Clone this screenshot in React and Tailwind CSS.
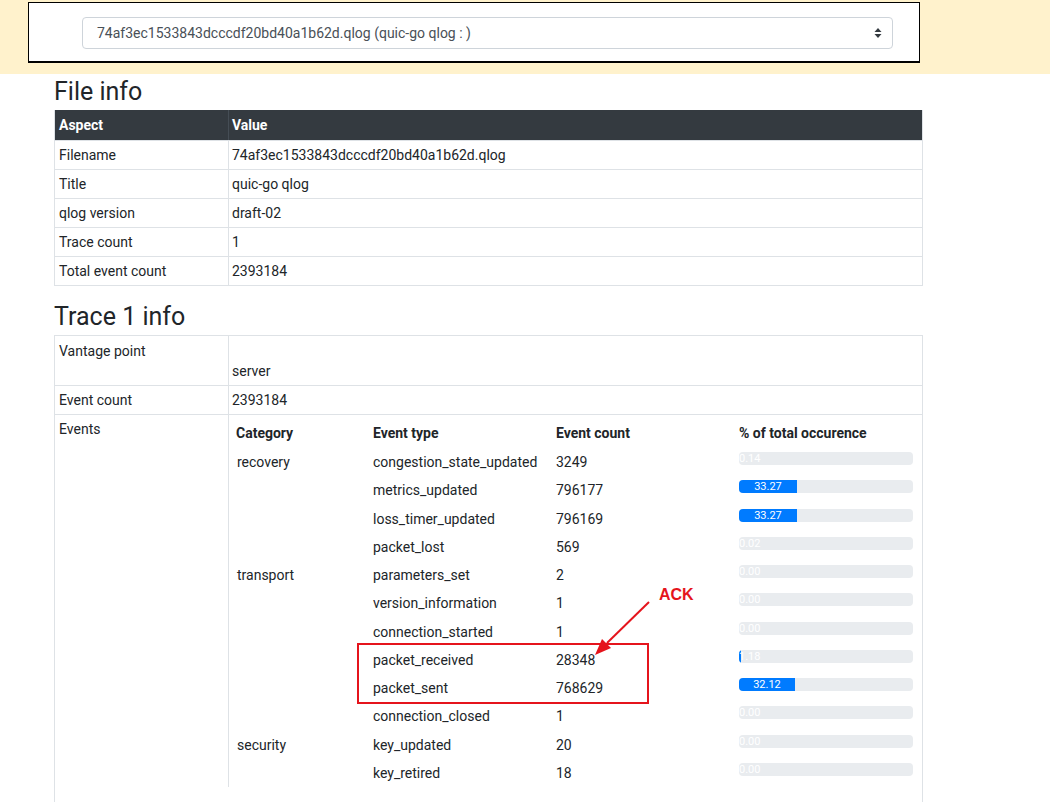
import React from "react";

const events = [
  ["recovery", "congestion_state_updated", "3249", 0.14],
  ["", "metrics_updated", "796177", 33.27],
  ["", "loss_timer_updated", "796169", 33.27],
  ["", "packet_lost", "569", 0.02],
  ["transport", "parameters_set", "2", 0.0],
  ["", "version_information", "1", 0.0],
  ["", "connection_started", "1", 0.0],
  ["", "packet_received", "28348", 1.18],
  ["", "packet_sent", "768629", 32.12],
  ["", "connection_closed", "1", 0.0],
  ["security", "key_updated", "20", 0.0],
  ["", "key_retired", "18", 0.0],
];

const fileRows = [
  ["Filename", "74af3ec1533843dcccdf20bd40a1b62d.qlog"],
  ["Title", "quic-go qlog"],
  ["qlog version", "draft-02"],
  ["Trace count", "1"],
  ["Total event count", "2393184"],
];

function SelectArrows() {
  return (
    <svg width="8" height="12" viewBox="0 0 8 12" className="shrink-0">
      <path d="M4 1 L7.5 5 L0.5 5 Z" fill="#343a40" />
      <path d="M4 11 L7.5 7 L0.5 7 Z" fill="#343a40" />
    </svg>
  );
}

export default function App() {
  return (
    <div
      className="relative min-h-[802px] bg-white text-[#212529] text-[14px]"
      style={{ fontFamily: "Roboto, 'Noto Sans', sans-serif" }}
    >
      {/* top banner */}
      <div className="h-[74px] bg-[#fff2cc] pt-[2px] pl-[28px]">
        <div className="w-[892px] h-[61px] bg-white border border-black border-b-2 pt-[14px] pl-[53px]">
          <div className="w-[811px] h-[32px] border border-[#ced4da] rounded-[4px] flex items-center justify-between pl-[14px] pr-[10px] text-[#495057]">
            <span>74af3ec1533843dcccdf20bd40a1b62d.qlog (quic-go qlog : )</span>
            <SelectArrows />
          </div>
        </div>
      </div>

      <div className="pl-[54px]">
        {/* File info */}
        <div className="h-[34px] pt-[2px] text-[25px] leading-[32px] text-[#212529]">File info</div>
        <div className="mt-[2px] w-[869px] border-l border-r border-b border-[#dee2e6]">
          <div className="flex h-[30px] bg-[#343a40] text-white font-bold">
            <div className="w-[174px] border-r border-[#454d55] flex items-center pl-[4px]">Aspect</div>
            <div className="flex-1 flex items-center pl-[3px]">Value</div>
          </div>
          {fileRows.map(([k, v]) => (
            <div key={k} className="flex h-[29px] border-t border-[#dee2e6]">
              <div className="w-[174px] border-r border-[#dee2e6] flex items-center pl-[4px]">{k}</div>
              <div className="flex-1 flex items-center pl-[3px]">{v}</div>
            </div>
          ))}
        </div>

        {/* Trace info */}
        <div className="mt-[15px] h-[32px] text-[25px] leading-[32px] text-[#212529]">Trace 1 info</div>
        <div className="mt-[2px] w-[869px] border-l border-r border-[#dee2e6]">
          <div className="flex h-[50px] border-t border-[#dee2e6]">
            <div className="w-[174px] border-r border-[#dee2e6] pl-[4px] pt-[5px] leading-[20px]">Vantage point</div>
            <div className="flex-1 pl-[3px] pt-[5px] leading-[20px]">
              <div className="h-[20px]"></div>
              <div>server</div>
            </div>
          </div>
          <div className="flex h-[29px] border-t border-[#dee2e6]">
            <div className="w-[174px] border-r border-[#dee2e6] flex items-center pl-[4px]">Event count</div>
            <div className="flex-1 flex items-center pl-[3px]">2393184</div>
          </div>
          <div className="flex border-t border-[#dee2e6] pb-[40px]">
            <div className="w-[174px] border-r border-[#dee2e6] pl-[4px] pt-[4px] leading-[20px]">Events</div>
            <div className="flex-1 pl-[3px] pr-[5px] pt-[4px]">
              <div className="w-[685px]">
                <div className="flex h-[29px] font-bold leading-[20px] pt-[4px]">
                  <div className="w-[137px] pl-[4px]">Category</div>
                  <div className="w-[183px] pl-[4px]">Event type</div>
                  <div className="w-[183px] pl-[4px]">Event count</div>
                  <div className="w-[182px] pl-[4px]">% of total occurence</div>
                </div>
                {events.map(([cat, type, count, pct], i) => (
                  <div key={i} className="flex h-[28.27px] leading-[20px] pt-[4px]">
                    <div className="w-[137px] pl-[5px]">{cat}</div>
                    <div className="w-[183px] pl-[4px]">{type}</div>
                    <div className="w-[183px] pl-[4px]">{count}</div>
                    <div className="w-[182px] pl-[4px] pr-[4px]">
                      <div className="h-[13px] rounded-[4px] bg-[#e9ecef] overflow-hidden flex">
                        <div
                          className="shrink-0 h-full bg-[#007bff] text-white text-[11px] leading-[13px] text-center whitespace-nowrap"
                          style={{ width: `${Math.round(pct * 1.74)}px` }}
                        >
                          {pct.toFixed(2)}
                        </div>
                      </div>
                    </div>
                  </div>
                ))}
              </div>
            </div>
          </div>
        </div>
      </div>

      {/* annotation overlay */}
      <div className="absolute left-[357px] top-[643px] w-[292px] h-[61px] border-2 border-[#e5141c]"></div>
      <div
        className="absolute left-[659px] top-[586px] text-[16px] font-bold leading-[18px] text-[#e5141c]"
        style={{ fontFamily: "'Liberation Sans', Arial, sans-serif" }}
      >
        ACK
      </div>
      <svg className="absolute left-[580px] top-[595px]" width="80" height="70" viewBox="0 0 80 70">
        <line x1="69" y1="7" x2="27" y2="48" stroke="#e5141c" strokeWidth="2" />
        <polygon points="15,60 31,53 22,44" fill="#e5141c" />
      </svg>
    </div>
  );
}
